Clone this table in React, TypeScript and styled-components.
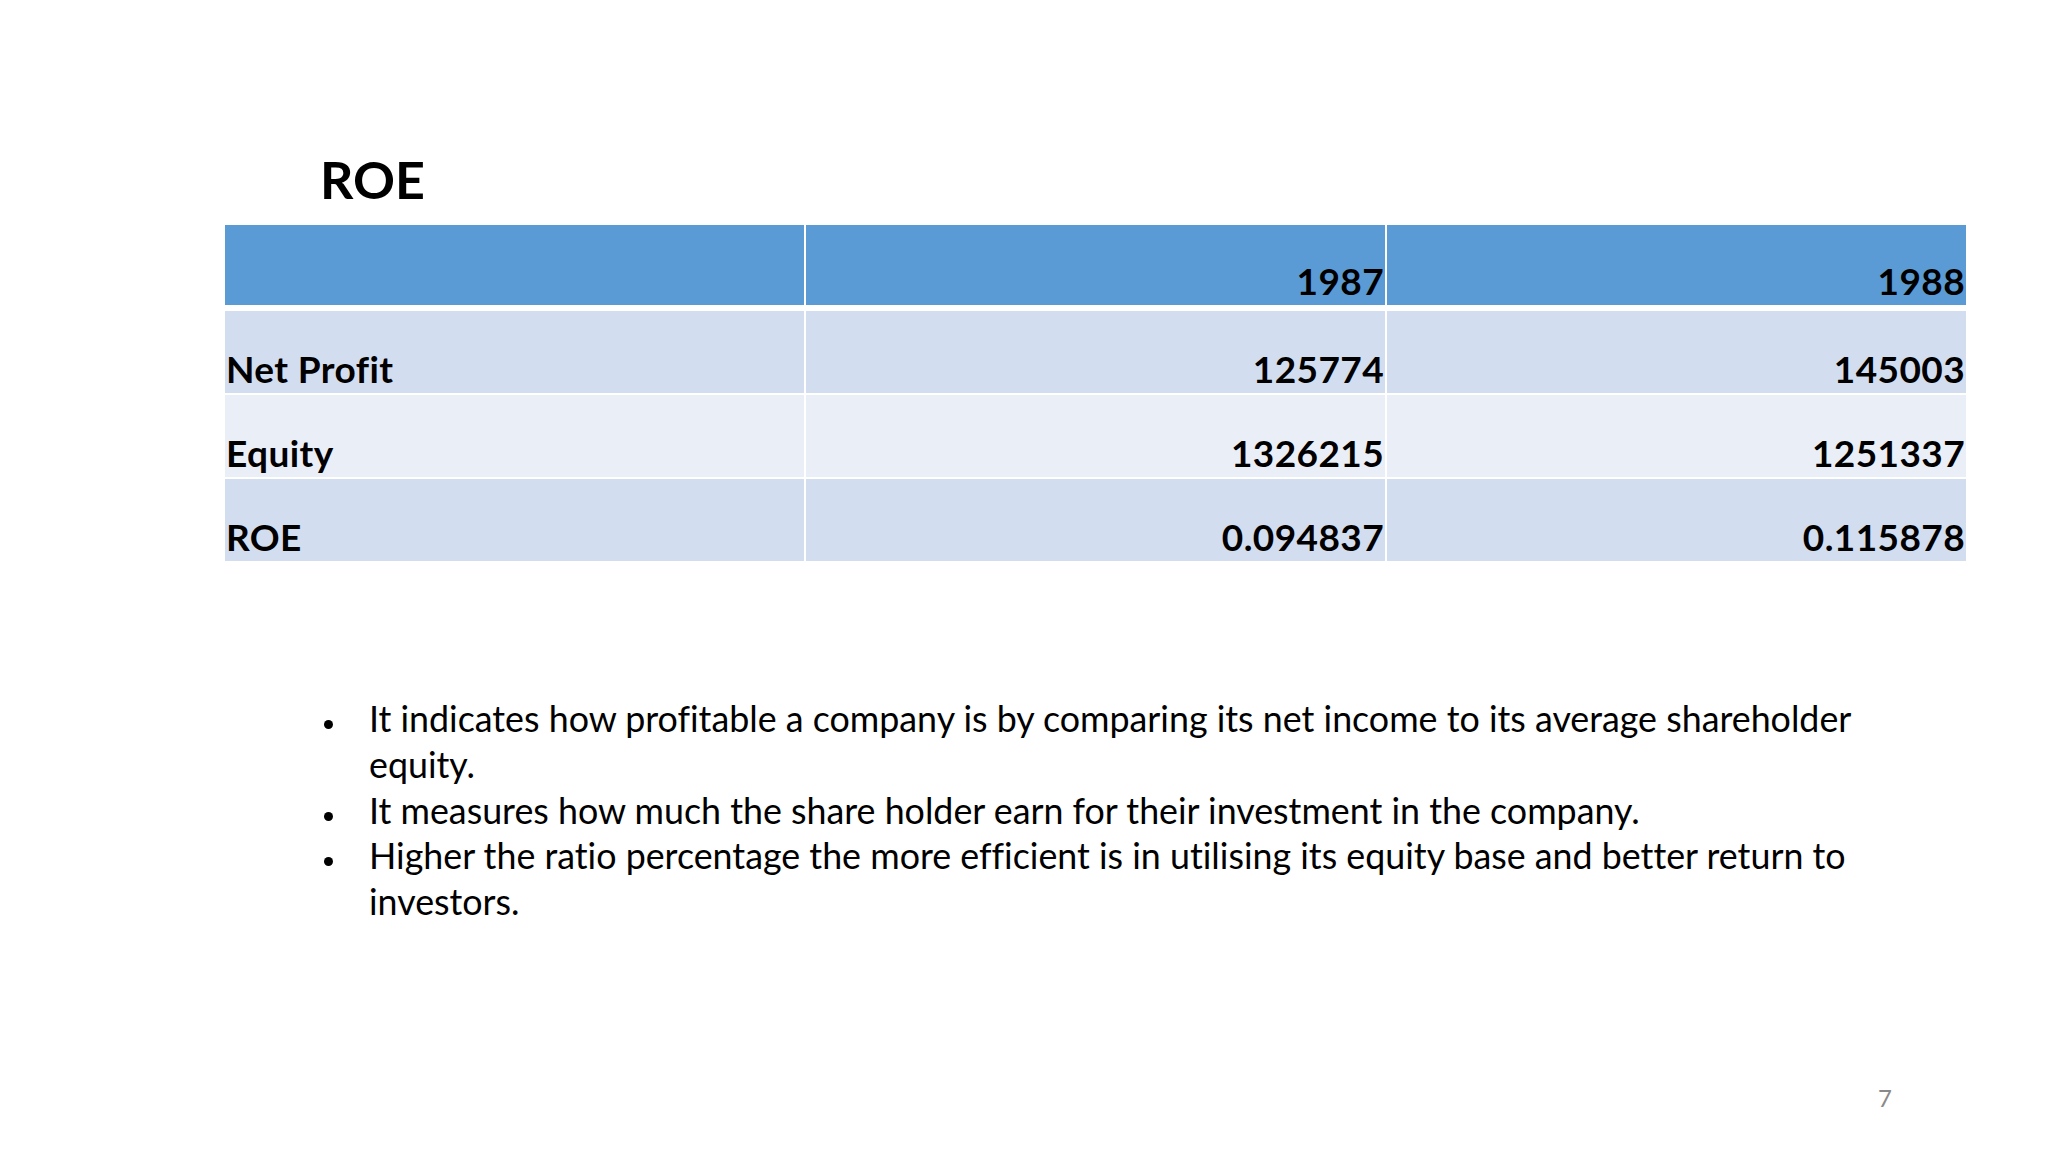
import React from "react";
import styled, { createGlobalStyle } from "styled-components";

const GlobalStyle = createGlobalStyle`
  html, body {
    margin: 0;
    padding: 0;
    background: #ffffff;
  }
  body {
    font-family: Lato, "Open Sans", "Liberation Sans", sans-serif;
    color: #000000;
    font-variant-ligatures: none;
  }
`;

const Slide = styled.div`
  width: 2048px;
  height: 1152px;
  box-sizing: border-box;
  padding: 153px 156px 42px 0;
  display: flex;
  flex-direction: column;
  background: #ffffff;
  overflow: hidden;
`;

const Title = styled.h1`
  margin: 0 0 0 320px;
  font-family: Lato, "Liberation Sans", sans-serif;
  font-weight: 700;
  font-size: 52px;
  line-height: 52px;
  height: 52px;
`;

const Table = styled.div`
  margin: 20px 0 0 225px;
  width: 1741px;
  display: flex;
  flex-direction: column;
  gap: 2px;
`;

const Row = styled.div<{ $bg: string; $h: number; $sep?: number }>`
  display: grid;
  grid-template-columns: repeat(3, 1fr);
  column-gap: 2px;
  height: ${(p) => p.$h}px;
  margin-bottom: ${(p) => p.$sep ?? 0}px;
  & > * {
    background: ${(p) => p.$bg};
  }
`;

const Cell = styled.div<{ $align?: "left" | "right" }>`
  display: flex;
  align-items: flex-end;
  justify-content: ${(p) => (p.$align === "right" ? "flex-end" : "flex-start")};
  padding: 0 ${(p) => (p.$align === "right" ? "1px" : "0")} 6px
    ${(p) => (p.$align === "right" ? "0" : "1px")};
  font-family: Lato, "Liberation Sans", sans-serif;
  font-weight: 700;
  font-size: 37px;
  line-height: 37px;
  letter-spacing: 0.4px;
  white-space: nowrap;
`;

const Bullets = styled.ul`
  list-style: none;
  margin: 135px 0 0 322px;
  padding: 0;
  width: 1560px;
`;

const Item = styled.li`
  display: flex;
  align-items: flex-start;
  font-family: Lato, "Liberation Sans", sans-serif;
  font-size: 35.8px;
  line-height: 45.75px;
`;

const Marker = styled.span`
  flex: none;
  width: 9px;
  height: 9px;
  border-radius: 50%;
  background: #000000;
  margin: 24px 36px 0 2px;
`;

const Footer = styled.div`
  margin-top: auto;
  align-self: flex-end;
  font-family: Lato, "Liberation Sans", sans-serif;
  font-size: 24px;
  line-height: 24px;
  color: #898989;
`;

const rows = [
  { label: "Net Profit", a: "125774", b: "145003", bg: "#D2DEEF" },
  { label: "Equity", a: "1326215", b: "1251337", bg: "#EAEFF7" },
  { label: "ROE", a: "0.094837", b: "0.115878", bg: "#D2DEEF" },
];

const points = [
  "It indicates how profitable a company is by comparing its net income to its average shareholder equity.",
  "It measures how much the share holder earn for their investment in the company.",
  "Higher the ratio percentage the more efficient is in utilising its equity base and better return to investors.",
];

export default function App() {
  return (
    <>
      <GlobalStyle />
      <Slide>
        <Title>ROE</Title>
        <Table>
          <Row $bg="#5B9BD5" $h={80} $sep={4}>
            <Cell />
            <Cell $align="right">1987</Cell>
            <Cell $align="right">1988</Cell>
          </Row>
          {rows.map((r) => (
            <Row key={r.label} $bg={r.bg} $h={82}>
              <Cell>{r.label}</Cell>
              <Cell $align="right">{r.a}</Cell>
              <Cell $align="right">{r.b}</Cell>
            </Row>
          ))}
        </Table>
        <Bullets>
          {points.map((p) => (
            <Item key={p}>
              <Marker />
              <span>{p}</span>
            </Item>
          ))}
        </Bullets>
        <Footer>7</Footer>
      </Slide>
    </>
  );
}
